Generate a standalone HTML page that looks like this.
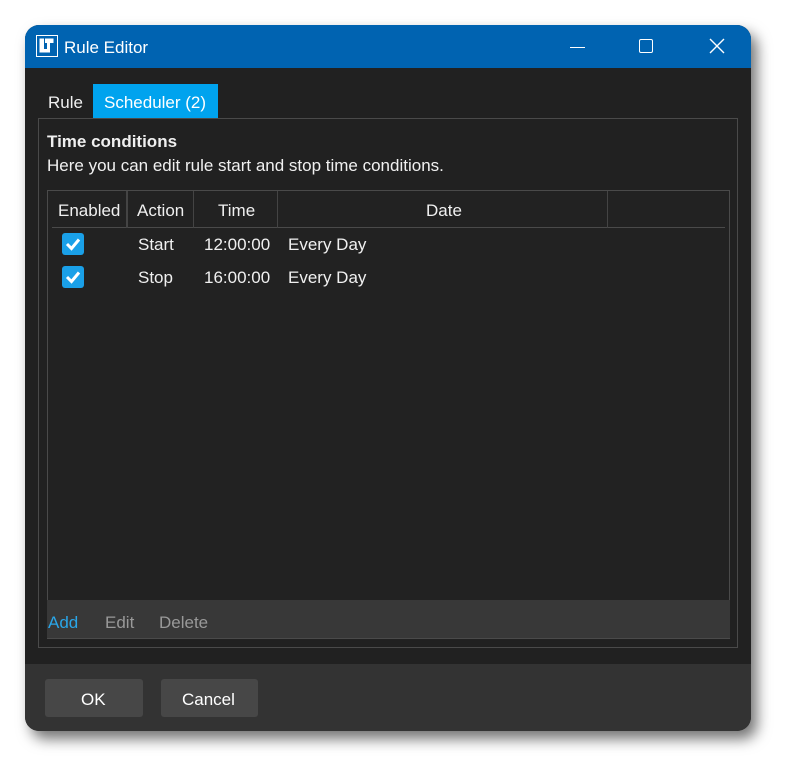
<!DOCTYPE html><html><head><style>
body{margin:0;width:792px;height:772px;background:#fff;font-family:"Liberation Sans",sans-serif;position:relative;overflow:hidden}
.win{position:absolute;left:25px;top:25px;width:726px;height:706px;border-radius:14px;background:#212121;overflow:hidden;box-shadow:6px 8px 14px rgba(0,0,0,.55)}
.title{position:absolute;left:0;top:0;width:726px;height:43px;background:#0063b1;color:#fff;font-size:17px}
.a{position:absolute;white-space:nowrap}
.t{color:#f0f0f0;font-size:17px}
.cb{position:absolute;left:62px;width:22px;height:22px;background:#1aa0e8;border-radius:3px}
</style></head><body>
<div class="win">
<div class="title">
<div class="a" style="left:11px;top:10px;width:22px;height:22px;border:1.5px solid #fff;box-sizing:border-box"><svg width="19" height="19" style="position:absolute;left:0;top:0"><path d="M2.5 2.5H7V13H10V7H8V2.5H16.5V7H13V16.5H2.5Z" fill="#fff"/></svg></div>
<div class="a" style="left:39px;top:13px">Rule Editor</div>
<div class="a" style="left:545px;top:22px;width:15px;height:1px;background:#fff"></div>
<div class="a" style="left:614px;top:14px;width:14px;height:14px;border:1.3px solid #fff;border-radius:2px;box-sizing:border-box"></div>
<svg class="a" style="left:684px;top:13px" width="16" height="16"><path d="M1 1L15 15M15 1L1 15" stroke="#fff" stroke-width="1.4"/></svg>
</div>
<div class="a t" style="left:23px;top:68px">Rule</div>
<div class="a" style="left:68px;top:59px;width:125px;height:34px;background:#00a3ee"></div>
<div class="a t" style="left:79px;top:68px;color:#fff">Scheduler (2)</div>
<div class="a" style="left:13px;top:93px;width:700px;height:530px;border:1px solid #4a4a4a;box-sizing:border-box"></div>
<div class="a t" style="left:22px;top:107px;font-weight:bold">Time conditions</div>
<div class="a t" style="left:22px;top:131px">Here you can edit rule start and stop time conditions.</div>
<div class="a" style="left:22px;top:165px;width:683px;height:449px;border:1px solid #4a4a4a;box-sizing:border-box;background:#222"></div>
<div class="a" style="left:27px;top:202px;width:673px;height:1px;background:#4a4a4a"></div>
<div class="a" style="left:101px;top:166px;width:2px;height:37px;background:#444"></div>
<div class="a" style="left:168px;top:166px;width:1px;height:37px;background:#444"></div>
<div class="a" style="left:252px;top:166px;width:1px;height:37px;background:#444"></div>
<div class="a" style="left:582px;top:166px;width:1px;height:37px;background:#444"></div>
<div class="a t" style="left:33px;top:176px">Enabled</div>
<div class="a t" style="left:112px;top:176px">Action</div>
<div class="a t" style="left:193px;top:176px">Time</div>
<div class="a t" style="left:401px;top:176px">Date</div>
<div class="cb" style="left:37px;top:208px"><svg width="22" height="22"><path d="M5 11L9.5 15.5L17 6.5" stroke="#fff" stroke-width="3" fill="none"/></svg></div>
<div class="cb" style="left:37px;top:241px"><svg width="22" height="22"><path d="M5 11L9.5 15.5L17 6.5" stroke="#fff" stroke-width="3" fill="none"/></svg></div>
<div class="a t" style="left:113px;top:210px">Start</div>
<div class="a t" style="left:179px;top:210px">12:00:00</div>
<div class="a t" style="left:263px;top:210px">Every Day</div>
<div class="a t" style="left:113px;top:243px">Stop</div>
<div class="a t" style="left:179px;top:243px">16:00:00</div>
<div class="a t" style="left:263px;top:243px">Every Day</div>
<div class="a" style="left:22px;top:575px;width:683px;height:38px;background:#383838"></div>
<div class="a" style="left:23px;top:588px;font-size:17px;color:#2aa6e8">Add</div>
<div class="a" style="left:80px;top:588px;font-size:17px;color:#999">Edit</div>
<div class="a" style="left:134px;top:588px;font-size:17px;color:#999">Delete</div>
<div class="a" style="left:0;top:639px;width:726px;height:67px;background:#333"></div>
<div class="a" style="left:20px;top:654px;width:98px;height:38px;background:#474747;border-radius:3px"></div>
<div class="a" style="left:136px;top:654px;width:97px;height:38px;background:#474747;border-radius:3px"></div>
<div class="a t" style="left:56px;top:665px;color:#fff">OK</div>
<div class="a t" style="left:157px;top:665px;color:#fff">Cancel</div>
</div>
</body></html>
